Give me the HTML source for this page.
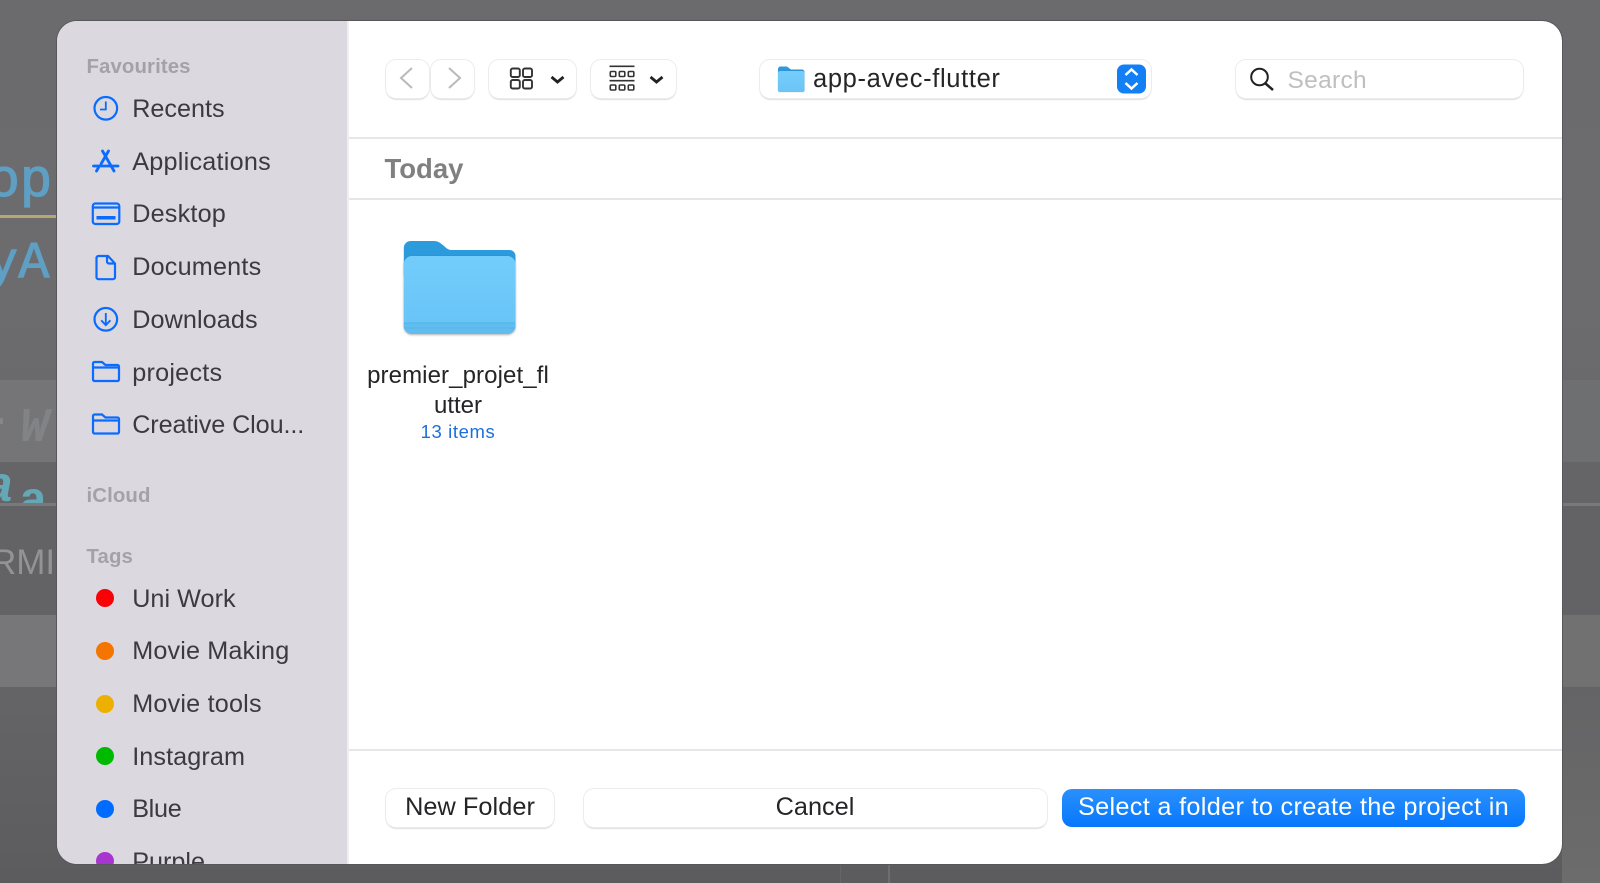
<!DOCTYPE html>
<html><head><meta charset="utf-8">
<style>
html,body{margin:0;padding:0;width:1600px;height:883px;overflow:hidden}
body{position:relative;background:linear-gradient(180deg,#6b6b6d 0,#6c6c6e 300px,#646466 700px,#5c5c5e 883px);font-family:"Liberation Sans",sans-serif}
.a{position:absolute}
.t{position:absolute;white-space:nowrap;line-height:30px;height:30px}
#bg{position:absolute;left:0;top:0;width:1600px;height:883px;overflow:hidden}
#win{position:absolute;left:56.5px;top:21px;width:1505.5px;height:843px;border-radius:20px;overflow:hidden;background:#fff;box-shadow:0 0 0 1px #57575a}
#side{position:absolute;left:0;top:0;width:290px;height:843px;background:#dbd8df;border-right:2px solid #efeef1}
.s{font-size:25.2px;color:#3c3a3f;left:75.7px}
.h{font-size:20.4px;font-weight:bold;color:#a4a2a8;left:30px;letter-spacing:.1px}
.dot{position:absolute;left:39.5px;width:18px;height:18px;border-radius:50%}
.btn{position:absolute;background:#fff;border-radius:10px;box-shadow:0 0 0 1px #ececec,0 1.5px 1.5px #c9c9c9;box-sizing:border-box}
.ln{position:absolute;height:2px;background:#e6e6e6;left:292px;width:1214px}
svg{position:absolute;overflow:visible}
.m{font-family:"Liberation Mono",monospace}
</style></head><body>
<div id="bg">
  <div class="a" style="left:0;top:380px;width:1600px;height:82px;background:linear-gradient(90deg,#757577,#6e6f71)"></div>
  <div class="a" style="left:0;top:462px;width:1600px;height:41px;background:#656567"></div>
  <div class="a" style="left:0;top:503px;width:1600px;height:3px;background:#79797b"></div>
  <div class="a" style="left:0;top:506px;width:1600px;height:109px;background:#636365"></div>
  <div class="a" style="left:0;top:615px;width:1600px;height:72px;background:linear-gradient(90deg,#777779,#717172)"></div>
  <div class="a" style="left:1562px;top:687px;width:38px;height:196px;background:linear-gradient(180deg,#646466,#6c6c6c)"></div>
  <div class="a" style="left:0;top:215px;width:57px;height:3px;background:#b5a772"></div>
  <div class="a" style="left:840px;top:864px;width:1px;height:19px;background:#666"></div>
  <div class="a" style="left:888px;top:864px;width:2px;height:19px;background:#6e6e6e"></div>
  <div class="t m" style="left:-12.500px;top:152.500px;font-size:54px;line-height:60px;height:60px;color:#5f9fc4;-webkit-text-stroke:1.200px #5f9fc4">op</div>
  <div class="t m" style="left:-13px;top:234px;font-size:52px;line-height:60px;height:60px;color:#5f9fc4;-webkit-text-stroke:1px #5f9fc4">yA</div>
  <div class="a" style="left:0;top:418px;width:3px;height:6px;background:#85868a"></div>
  <div class="t m" style="left:20px;top:399px;font-size:48px;line-height:60px;height:60px;color:#828387;font-style:italic;font-weight:bold">W</div>
  <div class="t" style="left:-9px;top:538px;font-size:35px;line-height:50px;height:50px;color:#939394">RMI</div>
  <div style="position:absolute;left:0;top:470px;width:57px;height:33px;overflow:hidden">
    <div class="t m" style="left:-16px;top:-11px;font-size:50px;line-height:60px;height:60px;color:#64a8b8;font-style:italic;font-weight:bold">a</div>
    <div class="t m" style="left:19px;top:3px;font-size:48px;line-height:60px;height:60px;color:#64a8b8;font-weight:bold">a</div>
  </div>
</div>
<div id="win">
  <div id="side">
    <div class="t h" style="top:31px">Favourites</div>
    <div class="t s" style="top:73px">Recents</div>
    <div class="t s" style="top:125.500px;letter-spacing:.25px">Applications</div>
    <div class="t s" style="top:178px;letter-spacing:.2px">Desktop</div>
    <div class="t s" style="top:231px;letter-spacing:.2px">Documents</div>
    <div class="t s" style="top:283.500px;letter-spacing:.1px">Downloads</div>
    <div class="t s" style="top:336.500px;letter-spacing:.25px">projects</div>
    <div class="t s" style="top:389px;letter-spacing:-.1px">Creative Clou...</div>
    <div class="t h" style="top:460px">iCloud</div>
    <div class="t h" style="top:521px">Tags</div>
    <div class="t s" style="top:562.500px;letter-spacing:.05px">Uni Work</div>
    <div class="t s" style="top:615px;letter-spacing:.15px">Movie Making</div>
    <div class="t s" style="top:668px;letter-spacing:.2px">Movie tools</div>
    <div class="t s" style="top:720.500px;letter-spacing:.1px">Instagram</div>
    <div class="t s" style="top:773px;letter-spacing:-.3px">Blue</div>
    <div class="t s" style="top:826px">Purple</div>
    <div class="dot" style="top:568px;background:#fb0007"></div>
    <div class="dot" style="top:620.500px;background:#f47500"></div>
    <div class="dot" style="top:673.500px;background:#eeb000"></div>
    <div class="dot" style="top:726px;background:#00ba00"></div>
    <div class="dot" style="top:778.500px;background:#006cff"></div>
    <div class="dot" style="top:831px;background:#a835cf"></div>
    <svg style="left:0;top:0" width="290" height="843" fill="none" stroke="#0a6cff" stroke-width="2.2">
      <circle cx="48.800" cy="87.300" r="11.300"/><path d="M48.800 80.500v8h-5.800" stroke-width="1.800"/>
      <path d="M45.500 130L57 150M51.500 130L44 143M36.500 145H61M41.500 146.500L39.500 150" stroke-width="2.800" stroke-linecap="round"/>
      <path d="M35.800 185a2.500 2.500 0 0 1 2.500-2.500h21.500a2.500 2.500 0 0 1 2.500 2.500v15.500a2.500 2.500 0 0 1-2.500 2.500H38.300a2.500 2.500 0 0 1-2.500-2.500zM35.800 186.500h26.500"/><path d="M39.500 196.700h19" stroke-width="3.500"/>
      <path d="M39.500 237a2 2 0 0 1 2-2h9.500l7 7.500v13.700a2 2 0 0 1-2 2H41.500a2 2 0 0 1-2-2zM50 235v5.500a2 2 0 0 0 2 2h6"/>
      <circle cx="48.800" cy="298.300" r="11.300"/><path d="M48.800 292v11.800M44.200 299.300l4.600 4.800 4.600-4.800" stroke-width="1.900"/>
      <path d="M36 342.500a1.500 1.500 0 0 1 1.500-1.500h7.500l3.500 3h12a1.500 1.500 0 0 1 1.500 1.500v13a1.500 1.500 0 0 1-1.500 1.500h-23a1.500 1.500 0 0 1-1.500-1.500zM36 346.500h25.500"/>
      <path d="M36 395a1.500 1.500 0 0 1 1.500-1.500h7.500l3.500 3h12a1.500 1.500 0 0 1 1.500 1.500v13a1.500 1.500 0 0 1-1.500 1.500h-23a1.500 1.500 0 0 1-1.500-1.500zM36 399.500h25.500"/>
    </svg>
  </div>
  <div class="a" style="left:0;top:0;width:0;height:0">
    <div class="btn" style="left:329.500px;top:38.500px;width:43px;height:38px"></div>
    <div class="btn" style="left:374.500px;top:38.500px;width:43px;height:38px"></div>
    <div class="btn" style="left:432.500px;top:38.500px;width:87px;height:38px"></div>
    <div class="btn" style="left:534.500px;top:38.500px;width:85px;height:38px"></div>
    <div class="btn" style="left:703.500px;top:38.500px;width:391px;height:38px"></div>
    <div class="btn" style="left:1179.500px;top:38.500px;width:287px;height:38px"></div>
    <svg style="left:0;top:0" width="1500" height="100" fill="none">
      <path d="M355 47L344 57l11 10" stroke="#b9b9b9" stroke-width="2"/>
      <path d="M392 47l11 10-11 10" stroke="#b9b9b9" stroke-width="2"/>
      <g stroke="#333" stroke-width="1.900"><rect x="453.800" y="47.500" width="9" height="8.500" rx="1.800"/><rect x="466" y="47.500" width="9" height="8.500" rx="1.800"/><rect x="453.800" y="59" width="9" height="8.500" rx="1.800"/><rect x="466" y="59" width="9" height="8.500" rx="1.800"/></g>
      <path d="M494.500 56l6 5 6-5" stroke="#222" stroke-width="2.800"/>
      <path d="M593.500 56l6 5 6-5" stroke="#222" stroke-width="2.800"/>
      <g stroke="#333" stroke-width="1.600"><path d="M552.500 45.300h25M552.500 59.700h25"/><rect x="553.300" y="50.500" width="5.500" height="5" rx="1"/><rect x="562.300" y="50.500" width="5.500" height="5" rx="1"/><rect x="571.300" y="50.500" width="5.500" height="5" rx="1"/><rect x="553.300" y="64" width="5.500" height="5" rx="1"/><rect x="562.300" y="64" width="5.500" height="5" rx="1"/><rect x="571.300" y="64" width="5.500" height="5" rx="1"/></g>
      <defs><linearGradient id="fg" x1="0" y1="0" x2="0" y2="1"><stop offset="0" stop-color="#74cdfb"/><stop offset="1" stop-color="#6bc4f5"/></linearGradient></defs>
      <path d="M721 48a2.500 2.500 0 0 1 2.500-2.500h6.500l4 3h11a2.500 2.500 0 0 1 2.500 2.500v4h-26.500z" fill="#2f9adb"/>
      <path d="M721 52a2 2 0 0 1 2-2h22.500a2 2 0 0 1 2 2v17a2 2 0 0 1-2 2H723a2 2 0 0 1-2-2z" fill="url(#fg)" style="filter:drop-shadow(0 .5px .5px rgba(0,0,0,.25))"/>
      <rect x="1060" y="43.500" width="29" height="29" rx="7" fill="#127ff5"/>
      <path d="M1068.500 54l6-5.500 6 5.500M1068.500 62l6 5.500 6-5.500" stroke="#fff" stroke-width="2.500"/>
      <circle cx="1202.500" cy="56" r="8.300" stroke="#222" stroke-width="2"/><path d="M1208.500 62.500l7.500 6.500" stroke="#222" stroke-width="2.500"/>
    </svg>
    <div class="t" style="left:756.500px;top:43px;font-size:25.500px;letter-spacing:.65px;color:#252527">app-avec-flutter</div>
    <div class="t" style="left:1231px;top:45px;font-size:24.500px;letter-spacing:.3px;color:#bfbfbf">Search</div>
    <div class="ln" style="top:116px"></div>
    <div class="t" style="left:328px;top:133px;font-size:27.500px;font-weight:bold;color:#808080">Today</div>
    <div class="ln" style="top:176.500px"></div>
    <svg style="left:0;top:0" width="1500" height="400" fill="none">
      <defs><linearGradient id="bf" x1="0" y1="0" x2="0" y2="1"><stop offset="0" stop-color="#72cdfc"/><stop offset="1" stop-color="#67c3f6"/></linearGradient></defs>
      <path d="M346.800 227a7 7 0 0 1 7-7h23c4 0 6 1.500 9 4s5 5 9 5h57.700a6 6 0 0 1 6 6v20h-111.700z" fill="#2b9bdc"/>
      <path d="M346.800 243a8 8 0 0 1 8-8h95.700a8 8 0 0 1 8 8v62a8 8 0 0 1-8 8h-95.700a8 8 0 0 1-8-8z" fill="url(#bf)" style="filter:drop-shadow(0 1px 1px rgba(0,0,0,.3))"/>
      <path d="M346.800 302h111.700v3a8 8 0 0 1-8 8h-95.700a8 8 0 0 1-8-8z" fill="#61bdef"/>
      <path d="M347 302h111M347 307h111" stroke="#55b2e6" stroke-width="1"/>
    </svg>
    <div class="t" style="left:310px;top:340px;width:183px;text-align:center;font-size:24px;letter-spacing:.1px;color:#252527">premier_projet_fl</div>
    <div class="t" style="left:310px;top:370px;width:183px;text-align:center;font-size:24px;color:#252527">utter</div>
    <div class="t" style="left:310px;top:396px;width:183px;text-align:center;font-size:18.500px;color:#1b6fdc;letter-spacing:.6px">13 items</div>
    <div class="ln" style="top:728px"></div>
    <div class="btn" style="left:329.500px;top:767.500px;width:168px;height:38px"></div>
    <div class="t" style="left:329.500px;top:771px;width:168px;text-align:center;font-size:25.300px;letter-spacing:.05px;color:#252527">New Folder</div>
    <div class="btn" style="left:527px;top:767.500px;width:463px;height:38px"></div>
    <div class="t" style="left:527px;top:771px;width:463px;text-align:center;font-size:25.300px;color:#252527">Cancel</div>
    <div class="a" style="left:1005.500px;top:767.500px;width:463px;height:38px;border-radius:10px;background:linear-gradient(180deg,#2a90fd,#0677fb)"></div>
    <div class="t" style="left:1005.500px;top:771px;width:463px;text-align:center;font-size:25.300px;letter-spacing:.3px;color:#fff">Select a folder to create the project in</div>
  </div>
</div>
</body></html>
